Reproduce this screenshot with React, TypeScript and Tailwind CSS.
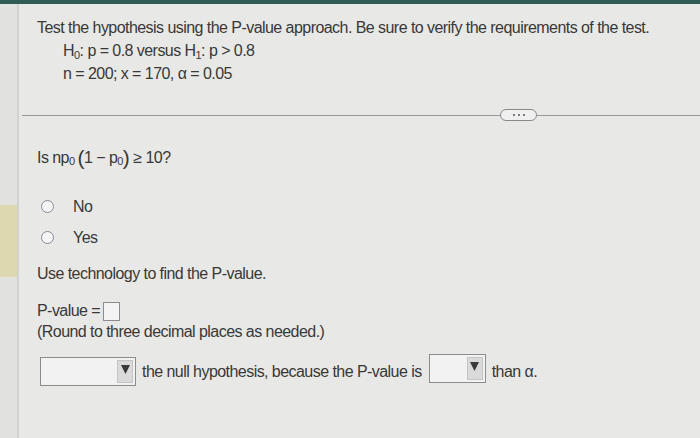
import React from 'react';

function Radio({ label }: { label: string }) {
  return (
    <div className="flex h-[31px] items-center">
      <span className="ml-[22px] inline-block h-[13px] w-[13px] rounded-full border-[1.5px] border-[#8a8a98] bg-[#f4f4f4]" />
      <span className="ml-[19px]">{label}</span>
    </div>
  );
}

function Dropdown({ width }: { width: string }) {
  return (
    <span className={`inline-flex h-[29px] items-stretch border border-[#8c8c8c] bg-[#f2f2f2] ${width}`}>
      <span className="flex-1" />
      <span className="my-[2px] mr-[2px] flex w-[16px] items-start justify-center border border-[#c4c4c4] bg-[#dadada] pt-[4px]">
        <svg width="9" height="9" viewBox="0 0 9 9">
          <path d="M0 0 H9 L4.5 9 Z" fill="#3a3a3a" />
        </svg>
      </span>
    </span>
  );
}

export default function App() {
  return (
    <div
      className="flex h-[438px] w-[700px] flex-col overflow-hidden bg-[#e8e8e6] text-[#383838]"
      style={{ fontFamily: '"Liberation Sans", Arial, sans-serif' }}
    >
      <div className="h-[4px] bg-[#2f5c55]" />
      <div className="flex flex-1">
        <div className="flex w-[17px] flex-col bg-[#e1e1df]">
          <div className="h-[201px]" />
          <div className="h-[72px] bg-[#ddd8b0]" />
        </div>
        <div className="w-[2px] bg-[#d2d2d0]" />
        <div className="flex-1 text-[16px] tracking-[-0.55px]">
          <div className="pl-[18px] pt-[12px] leading-[23px]">
            Test the hypothesis using the P-value approach. Be sure to verify the requirements of the test.
          </div>
          <div className="pl-[44px] leading-[23px]">
            <div>
              H<sub className="text-[11px]">0</sub>: p = 0.8 versus H<sub className="text-[11px]">1</sub>: p &gt; 0.8
            </div>
            <div>n = 200; x = 170, α = 0.05</div>
          </div>
          <div className="mt-[24px] flex items-center pl-[3px]">
            <div className="h-px w-[478px] bg-[#9a9a9a]" />
            <div className="flex h-[12px] w-[37px] items-center justify-center gap-[3px] rounded-full border border-[#8a8a8a] bg-[#f0f0f0]">
              <span className="h-[2px] w-[2px] rounded-full bg-[#555]" />
              <span className="h-[2px] w-[2px] rounded-full bg-[#555]" />
              <span className="h-[2px] w-[2px] rounded-full bg-[#555]" />
            </div>
            <div className="h-px flex-1 bg-[#9a9a9a]" />
          </div>
          <div className="mt-[25px] flex h-[24px] items-center pl-[18px]">
            <span>Is np</span>
            <sub className="text-[11px]">0</sub>
            <span className="ml-[3px] text-[21px] font-light">(</span>
            <span>1 − p</span>
            <sub className="text-[11px]">0</sub>
            <span className="text-[21px] font-light">)</span>
            <span className="ml-[4px]">≥ 10?</span>
          </div>
          <div className="mt-[21px]">
            <Radio label="No" />
            <Radio label="Yes" />
          </div>
          <div className="mt-[10px] pl-[18px] leading-[22px]">Use technology to find the P-value.</div>
          <div className="mt-[15px] flex h-[22px] items-center pl-[18px]">
            <span>P-value =</span>
            <span className="ml-[3px] inline-block h-[19px] w-[17px] border border-[#8c8c8c] bg-[#f4f4f4]" />
          </div>
          <div className="pl-[18px] leading-[20px]">(Round to three decimal places as needed.)</div>
          <div className="mt-[12px] flex items-center pl-[21px]">
            <Dropdown width="w-[96px]" />
            <span className="ml-[6px]">the null hypothesis, because the P-value is</span>
            <span className="ml-[7px]">
              <Dropdown width="w-[57px]" />
            </span>
            <span className="ml-[6px]">than α.</span>
          </div>
        </div>
      </div>
    </div>
  );
}
